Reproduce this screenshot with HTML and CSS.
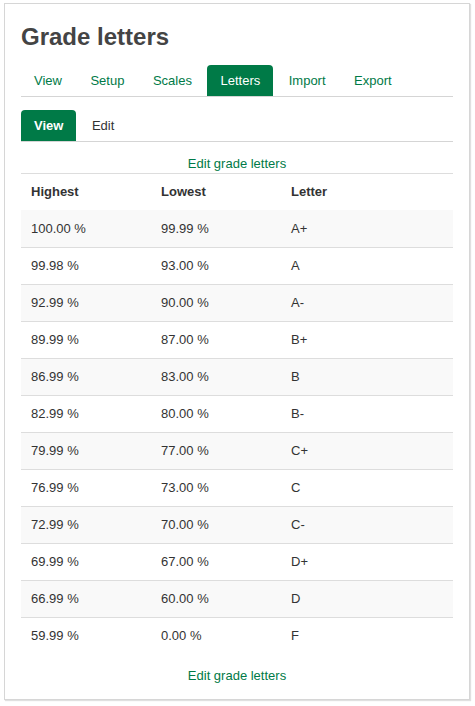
FILE: index.html
```html
<!DOCTYPE html>
<html lang="en">
<head>
  <meta charset="UTF-8">
  <title>Grade letters</title>
  <link rel="stylesheet" href="styles.css">
</head>
<body>
  <div class="page">
    <h1>Grade letters</h1>

    <ul class="tabs">
      <li><a href="#">View</a></li>
      <li><a href="#">Setup</a></li>
      <li><a href="#">Scales</a></li>
      <li class="active"><a href="#">Letters</a></li>
      <li><a href="#">Import</a></li>
      <li><a href="#">Export</a></li>
    </ul>

    <ul class="tabs sub">
      <li class="active"><a href="#">View</a></li>
      <li><a href="#">Edit</a></li>
    </ul>

    <div class="edit-link"><a href="#">Edit grade letters</a></div>

    <table class="letters">
      <thead>
        <tr><th class="col">Highest</th><th class="col">Lowest</th><th>Letter</th></tr>
      </thead>
      <tbody id="rows"></tbody>
    </table>

    <div class="edit-link bottom"><a href="#">Edit grade letters</a></div>
  </div>

  <script>
    const letters = [
      ["100.00 %", "99.99 %", "A+"],
      ["99.98 %", "93.00 %", "A"],
      ["92.99 %", "90.00 %", "A-"],
      ["89.99 %", "87.00 %", "B+"],
      ["86.99 %", "83.00 %", "B"],
      ["82.99 %", "80.00 %", "B-"],
      ["79.99 %", "77.00 %", "C+"],
      ["76.99 %", "73.00 %", "C"],
      ["72.99 %", "70.00 %", "C-"],
      ["69.99 %", "67.00 %", "D+"],
      ["66.99 %", "60.00 %", "D"],
      ["59.99 %", "0.00 %", "F"]
    ]

    const tbody = document.getElementById("rows")
    letters.forEach(row => {
      const tr = document.createElement("tr")
      tr.innerHTML = `<td>${row[0]}</td><td>${row[1]}</td><td>${row[2]}</td>`
      tbody.appendChild(tr)
    })
  </script>
</body>
</html>
```

FILE: styles.css
```css
body { margin: 0; background: #fff; font-family: "Liberation Sans", Arial, sans-serif; font-size: 13px; line-height: 19px; color: #333; }
a { color: #007a47; text-decoration: none; }

.page { margin: 3px 5px 6px 4px; padding: 19px 16px 14px; border: 1px solid #d6d6d6; box-shadow: 1px 1px 1px rgba(0,0,0,0.12); }

h1 { margin: 0 0 14px; font-size: 24px; line-height: 28px; font-weight: bold; color: #444; }

.tabs { display: flex; margin: 0; padding: 0; list-style: none; border-bottom: 1px solid #d5d5d5; }
.tabs li { margin-right: 2.5px; }
.tabs a { display: block; padding: 6px 13px; border-radius: 4px 4px 0 0; }
.tabs .active a { background: #007a47; color: #fff; }
.tabs.sub { margin-top: 13px; }
.tabs.sub .active a { font-weight: bold; }
.tabs.sub li + li a { color: #333; }

.edit-link { text-align: center; margin-top: 12px; }
.edit-link.bottom { margin-top: 12px; }

.letters { width: 100%; border-collapse: collapse; border-spacing: 0; }
.letters th, .letters td { padding: 8px 10px; line-height: 20px; text-align: left; border-top: 1px solid #ddd; }
.letters th { font-weight: bold; }
.letters th.col { width: 110px; }
.letters tbody tr:first-child td { border-top: 0; padding-top: 9px; }
.letters tbody tr:nth-child(odd) td { background: #f9f9f9; }
```
